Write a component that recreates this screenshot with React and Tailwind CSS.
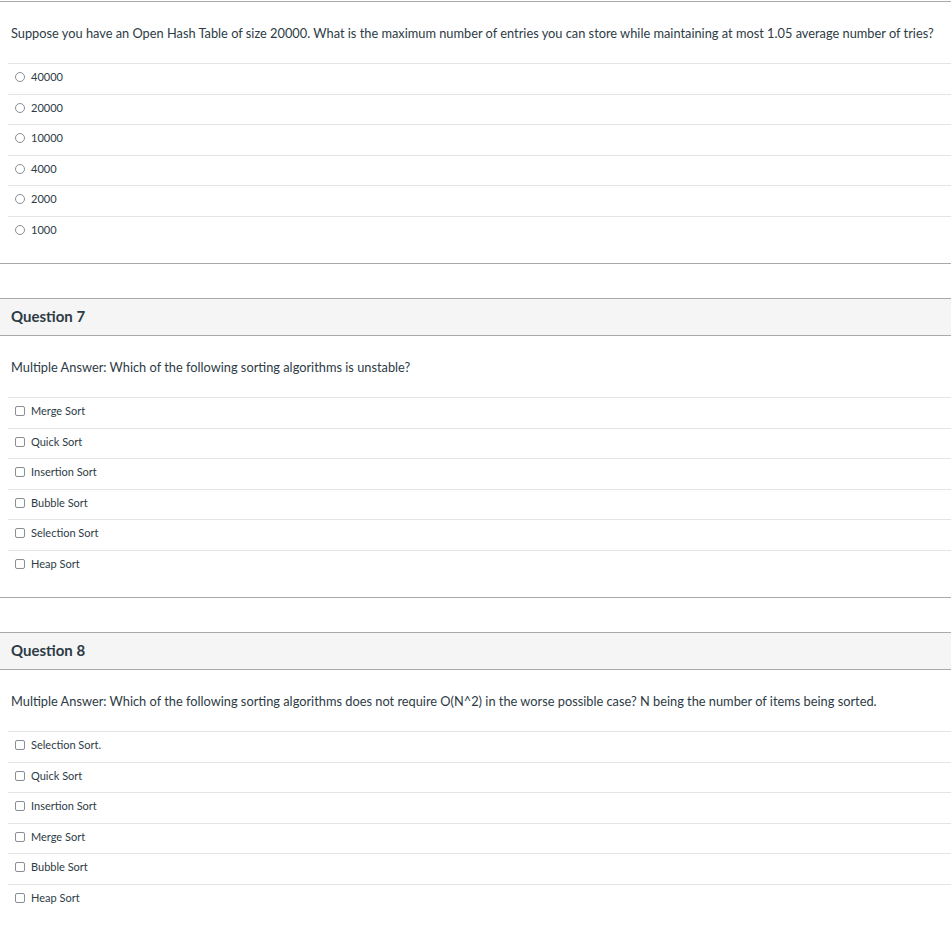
import React from "react";

const font = { fontFamily: "Lato, 'Open Sans', sans-serif" };

function Radio() {
  return <span className="inline-block w-[10px] h-[10px] rounded-full border border-[#8a8f94] bg-white shrink-0" />;
}
function Check() {
  return <span className="inline-block w-[10px] h-[10px] rounded-[2px] border border-[#8a8f94] bg-white shrink-0" />;
}

function Answers({ items, type }) {
  return (
    <div className="ml-[8px] mt-[20px]">
      {items.map((t) => (
        <div key={t} className="h-[30.5px] border-t border-[#e2e4e6] flex items-center pl-[7px] gap-[6px] pb-[3px]">
          {type === "radio" ? <Radio /> : <Check />}
          <span className="text-[11px] leading-[16px] text-[#2d3b45]">{t}</span>
        </div>
      ))}
    </div>
  );
}

function Body({ text, items, type }) {
  return (
    <div className="border-b border-[#a9a9a9] pb-[17px]">
      <p className="pt-[21px] px-[11px] text-[12.8px] leading-[20px] text-[#2d3b45] whitespace-nowrap">{text}</p>
      <Answers items={items} type={type} />
    </div>
  );
}

function Header({ title }) {
  return (
    <div className="mt-[34px] h-[38px] border-t border-b border-[#a9a9a9] bg-[#f5f5f5] flex items-center px-[11px] pb-[3px]">
      <h2 className="text-[15px] font-bold text-[#2d3b45] leading-[20px]">{title}</h2>
    </div>
  );
}

export default function App() {
  return (
    <div className="bg-white w-[951px] min-h-[925px] overflow-hidden" style={font}>
      <div className="mt-[1px] border-t border-[#a9a9a9]" />
      <Body
        type="radio"
        text="Suppose you have an Open Hash Table of size 20000. What is the maximum number of entries you can store while maintaining at most 1.05 average number of tries?"
        items={["40000", "20000", "10000", "4000", "2000", "1000"]}
      />
      <Header title="Question 7" />
      <Body
        type="check"
        text="Multiple Answer: Which of the following sorting algorithms is unstable?"
        items={["Merge Sort", "Quick Sort", "Insertion Sort", "Bubble Sort", "Selection Sort", "Heap Sort"]}
      />
      <Header title="Question 8" />
      <Body
        type="check"
        text="Multiple Answer: Which of the following sorting algorithms does not require O(N^2) in the worse possible case? N being the number of items being sorted."
        items={["Selection Sort.", "Quick Sort", "Insertion Sort", "Merge Sort", "Bubble Sort", "Heap Sort"]}
      />
    </div>
  );
}
